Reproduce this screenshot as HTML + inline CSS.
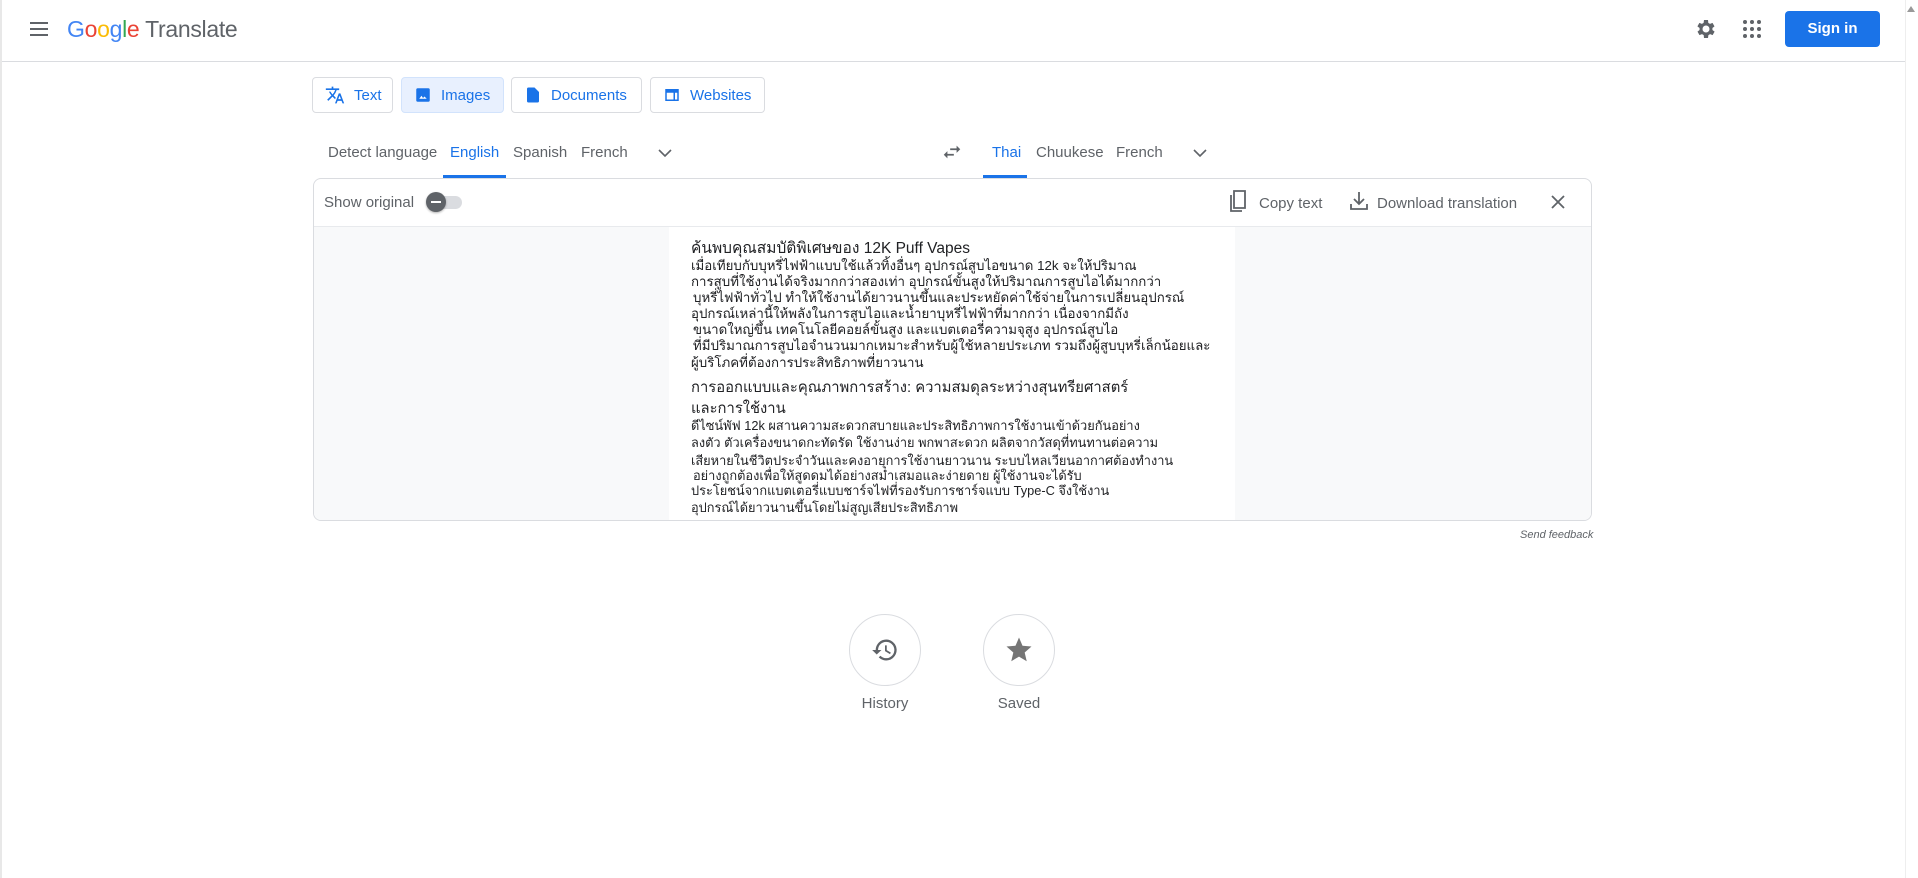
<!DOCTYPE html>
<html><head><meta charset="utf-8"><style>
*{box-sizing:border-box;margin:0;padding:0}
body{width:1918px;height:878px;background:#fff;font-family:"Liberation Sans","Noto Sans CJK SC",sans-serif;color:#3c4043;position:relative;overflow:hidden}
.a{position:absolute}
.hdr{left:2px;top:0;width:1903px;height:62px;border-bottom:1px solid #dadce0}
.tab{position:absolute;top:77px;height:36px;border:1px solid #dadce0;border-radius:4px;font-size:15px;color:#1a73e8;display:flex;align-items:center;padding-left:12px;gap:9px}
.lang{position:absolute;top:144px;font-size:15px;color:#5f6368;font-weight:500}
.t{font-size:13.3px;color:#202124;white-space:nowrap;position:absolute;left:691px;font-family:"Liberation Sans","Noto Sans CJK SC","WenQuanYi Zen Hei",sans-serif}
.p2{font-size:12.8px}
</style></head><body>
<div class="a" style="left:0;top:0;width:2px;height:878px;background:#e8e8e8"></div>
<div class="a" style="right:0;top:0;width:13px;height:878px;background:#fff;border-left:1px solid #eee"></div>
<div class="a" style="right:3px;top:6px;width:0;height:0;border-left:4px solid transparent;border-right:4px solid transparent;border-bottom:6px solid #999"></div>
<div class="a hdr"></div>
<svg class="a" style="left:28px;top:19px" width="22" height="20" viewBox="0 0 22 20"><path d="M2 4h18M2 10h18M2 16h18" stroke="#5f6368" stroke-width="2"/></svg>
<div class="a" style="left:67px;top:16px;font-size:23px;letter-spacing:-0.3px"><span style="color:#4285f4">G</span><span style="color:#ea4335">o</span><span style="color:#fbbc05">o</span><span style="color:#4285f4">g</span><span style="color:#34a853">l</span><span style="color:#ea4335">e</span> <span style="color:#5f6368">Translate</span></div>
<svg class="a" style="left:1694px;top:17px" width="24" height="24" viewBox="0 0 24 24"><path fill="#5f6368" d="M19.4 13a7.5 7.5 0 000-2l2.1-1.6-2-3.5-2.5 1a7 7 0 00-1.7-1L15 3h-4l-.4 2.9a7 7 0 00-1.7 1l-2.5-1-2 3.5L6.6 11a7.5 7.5 0 000 2l-2.1 1.6 2 3.5 2.5-1a7 7 0 001.7 1L11 21h4l.4-2.9a7 7 0 001.7-1l2.5 1 2-3.5zM13 15.5a3.5 3.5 0 110-7 3.5 3.5 0 010 7z" transform="translate(-1 0)"/></svg>
<svg class="a" style="left:1742px;top:19px" width="20" height="20" viewBox="0 0 20 20" fill="#5f6368"><circle cx="3" cy="3" r="2"/><circle cx="10" cy="3" r="2"/><circle cx="17" cy="3" r="2"/><circle cx="3" cy="10" r="2"/><circle cx="10" cy="10" r="2"/><circle cx="17" cy="10" r="2"/><circle cx="3" cy="17" r="2"/><circle cx="10" cy="17" r="2"/><circle cx="17" cy="17" r="2"/></svg>
<div class="a" style="left:1785px;top:11px;width:95px;height:36px;background:#1a73e8;border-radius:4px;color:#fff;font-size:15px;font-weight:bold;text-align:center;line-height:36px">Sign in</div>

<div class="tab" style="left:312px;width:81px">
<svg width="20" height="20" viewBox="0 0 24 24"><path fill="#1a73e8" d="M12.9 15.1l-2.5-2.5 0 0a17 17 0 003.6-6.4H17V4h-7V2H8v2H1v2h11.2A15.7 15.7 0 019 11.4 15.6 15.6 0 016.7 8h-2a17.6 17.6 0 003 4.6L2.6 17.6 4 19l5-5 3.1 3.1zM18.5 10h-2L12 22h2l1.1-3h4.8l1.1 3h2zm-2.6 7l1.6-4.3 1.6 4.3z"/></svg><span>Text</span></div>
<div class="tab" style="left:401px;width:103px;background:#e8f0fe;border-color:#d2e3fc">
<svg width="18" height="18" viewBox="0 0 24 24"><rect x="3" y="3" width="18" height="18" rx="2" fill="#1a73e8"/><path d="M7 17l3-4 2 3 2-2 3 3z" fill="#fff"/></svg><span>Images</span></div>
<div class="tab" style="left:511px;width:131px">
<svg width="18" height="20" viewBox="0 0 24 24"><path fill="#1a73e8" d="M14 2H6a2 2 0 00-2 2v16a2 2 0 002 2h12a2 2 0 002-2V8z"/></svg><span>Documents</span></div>
<div class="tab" style="left:650px;width:115px">
<svg width="18" height="18" viewBox="0 0 24 24"><path fill="#1a73e8" d="M3 4h18v16H3zM5 9v9h9V9zm11 0v9h3V9z"/></svg><span>Websites</span></div>

<div class="lang" style="left:328px">Detect language</div>
<div class="lang" style="left:450px;color:#1a73e8">English</div>
<div class="a" style="left:443px;top:175px;width:63px;height:3px;background:#1a73e8"></div>
<div class="lang" style="left:513px">Spanish</div>
<div class="lang" style="left:581px">French</div>
<svg class="a" style="left:657px;top:145px" width="16" height="16" viewBox="0 0 16 16"><path d="M2 5l6 6 6-6" stroke="#5f6368" stroke-width="1.6" fill="none"/></svg>
<svg class="a" style="left:941px;top:141px" width="22" height="22" viewBox="0 0 24 24"><path fill="#5f6368" d="M6.99 11L3 15l3.99 4v-3H14v-2H6.99zM21 9l-3.99-4v3H10v2h7.01v3z"/></svg>
<div class="lang" style="left:992px;color:#1a73e8">Thai</div>
<div class="a" style="left:983px;top:175px;width:44px;height:3px;background:#1a73e8"></div>
<div class="lang" style="left:1036px">Chuukese</div>
<div class="lang" style="left:1116px">French</div>
<svg class="a" style="left:1192px;top:145px" width="16" height="16" viewBox="0 0 16 16"><path d="M2 5l6 6 6-6" stroke="#5f6368" stroke-width="1.6" fill="none"/></svg>

<div class="a" style="left:313px;top:178px;width:1279px;height:343px;border:1px solid #dadce0;border-radius:8px;overflow:hidden">
 <div class="a" style="left:0;top:47px;width:1279px;height:1px;background:#e8eaed"></div>
 <div class="a" style="left:0;top:48px;width:1279px;height:300px;background:#f8f9fa"></div>
 <div class="a" style="left:355px;top:48px;width:566px;height:300px;background:#fff"></div>
</div>
<div class="a" style="left:324px;top:194px;font-size:15px;color:#5f6368">Show original</div>
<div class="a" style="left:430px;top:196px;width:32px;height:13px;border-radius:7px;background:#dadce0"></div>
<div class="a" style="left:426px;top:192px;width:20px;height:20px;border-radius:50%;background:#5f6368;box-shadow:0 1px 2px rgba(0,0,0,.3)"></div>
<div class="a" style="left:431px;top:201px;width:10px;height:2px;background:#fff"></div>
<svg class="a" style="left:1228px;top:189px" width="22" height="24" viewBox="0 0 22 24"><path d="M6 2h11v17H6zM3 6v16h11" stroke="#5f6368" stroke-width="1.8" fill="none"/></svg>
<div class="a" style="left:1259px;top:195px;font-size:15px;color:#5f6368">Copy text</div>
<svg class="a" style="left:1349px;top:190px" width="20" height="22" viewBox="0 0 20 22"><path d="M10 2v12M5 9l5 5 5-5M2 14v5h16v-5" stroke="#5f6368" stroke-width="1.8" fill="none"/></svg>
<div class="a" style="left:1377px;top:195px;font-size:15px;color:#5f6368">Download translation</div>
<svg class="a" style="left:1550px;top:194px" width="16" height="16" viewBox="0 0 16 16"><path d="M2 2l12 12M14 2L2 14" stroke="#5f6368" stroke-width="1.8"/></svg>

<div class="t" style="top:235px;font-size:15.5px">ค้นพบคุณสมบัติพิเศษของ 12K Puff Vapes</div>
<div class="t" style="top:255px">เมื่อเทียบกับบุหรี่ไฟฟ้าแบบใช้แล้วทิ้งอื่นๆ อุปกรณ์สูบไอขนาด 12k จะให้ปริมาณ</div>
<div class="t" style="top:271px">การสูบที่ใช้งานได้จริงมากกว่าสองเท่า อุปกรณ์ขั้นสูงให้ปริมาณการสูบไอได้มากกว่า</div>
<div class="t" style="top:287px;left:693px">บุหรี่ไฟฟ้าทั่วไป ทำให้ใช้งานได้ยาวนานขึ้นและประหยัดค่าใช้จ่ายในการเปลี่ยนอุปกรณ์</div>
<div class="t" style="top:303px">อุปกรณ์เหล่านี้ให้พลังในการสูบไอและน้ำยาบุหรี่ไฟฟ้าที่มากกว่า เนื่องจากมีถัง</div>
<div class="t" style="top:319px;left:693px">ขนาดใหญ่ขึ้น เทคโนโลยีคอยล์ขั้นสูง และแบตเตอรี่ความจุสูง อุปกรณ์สูบไอ</div>
<div class="t" style="top:335px;left:693px">ที่มีปริมาณการสูบไอจำนวนมากเหมาะสำหรับผู้ใช้หลายประเภท รวมถึงผู้สูบบุหรี่เล็กน้อยและ</div>
<div class="t" style="top:352px">ผู้บริโภคที่ต้องการประสิทธิภาพที่ยาวนาน</div>
<div class="t" style="top:375px;font-size:14.8px">การออกแบบและคุณภาพการสร้าง: ความสมดุลระหว่างสุนทรียศาสตร์</div>
<div class="t" style="top:396px;font-size:14.8px">และการใช้งาน</div>
<div class="t p2" style="top:415px">ดีไซน์พัฟ 12k ผสานความสะดวกสบายและประสิทธิภาพการใช้งานเข้าด้วยกันอย่าง</div>
<div class="t p2" style="top:432px">ลงตัว ตัวเครื่องขนาดกะทัดรัด ใช้งานง่าย พกพาสะดวก ผลิตจากวัสดุที่ทนทานต่อความ</div>
<div class="t p2" style="top:450px">เสียหายในชีวิตประจำวันและคงอายุการใช้งานยาวนาน ระบบไหลเวียนอากาศต้องทำงาน</div>
<div class="t p2" style="top:465px;left:693px">อย่างถูกต้องเพื่อให้สูดดมได้อย่างสม่ำเสมอและง่ายดาย ผู้ใช้งานจะได้รับ</div>
<div class="t p2" style="top:480px">ประโยชน์จากแบตเตอรี่แบบชาร์จไฟที่รองรับการชาร์จแบบ Type-C จึงใช้งาน</div>
<div class="t p2" style="top:497px">อุปกรณ์ได้ยาวนานขึ้นโดยไม่สูญเสียประสิทธิภาพ</div>
<div class="a" style="left:1520px;top:529px;font-size:11px;font-style:italic;color:#5f6368">Send feedback</div>

<div class="a" style="left:849px;top:614px;width:72px;height:72px;border:1px solid #dadce0;border-radius:50%"></div>
<svg class="a" style="left:871px;top:636px" width="28" height="28" viewBox="0 0 24 24"><path fill="#5f6368" d="M13 3a9 9 0 00-9 9H1l3.9 3.9L9 12H6a7 7 0 112.05 4.95l-1.42 1.42A9 9 0 1013 3zm-1 5v5l4.25 2.52.77-1.28-3.52-2.09V8z"/></svg>
<div class="a" style="left:849px;top:695px;width:72px;text-align:center;font-size:15px;color:#5f6368">History</div>
<div class="a" style="left:983px;top:614px;width:72px;height:72px;border:1px solid #dadce0;border-radius:50%"></div>
<svg class="a" style="left:1004px;top:635px" width="30" height="30" viewBox="0 0 24 24"><path fill="#757575" d="M12 17.27L18.18 21l-1.64-7.03L22 9.24l-7.19-.61L12 2 9.19 8.63 2 9.24l5.46 4.73L5.82 21z"/></svg>
<div class="a" style="left:983px;top:695px;width:72px;text-align:center;font-size:15px;color:#5f6368">Saved</div>
</body></html>
